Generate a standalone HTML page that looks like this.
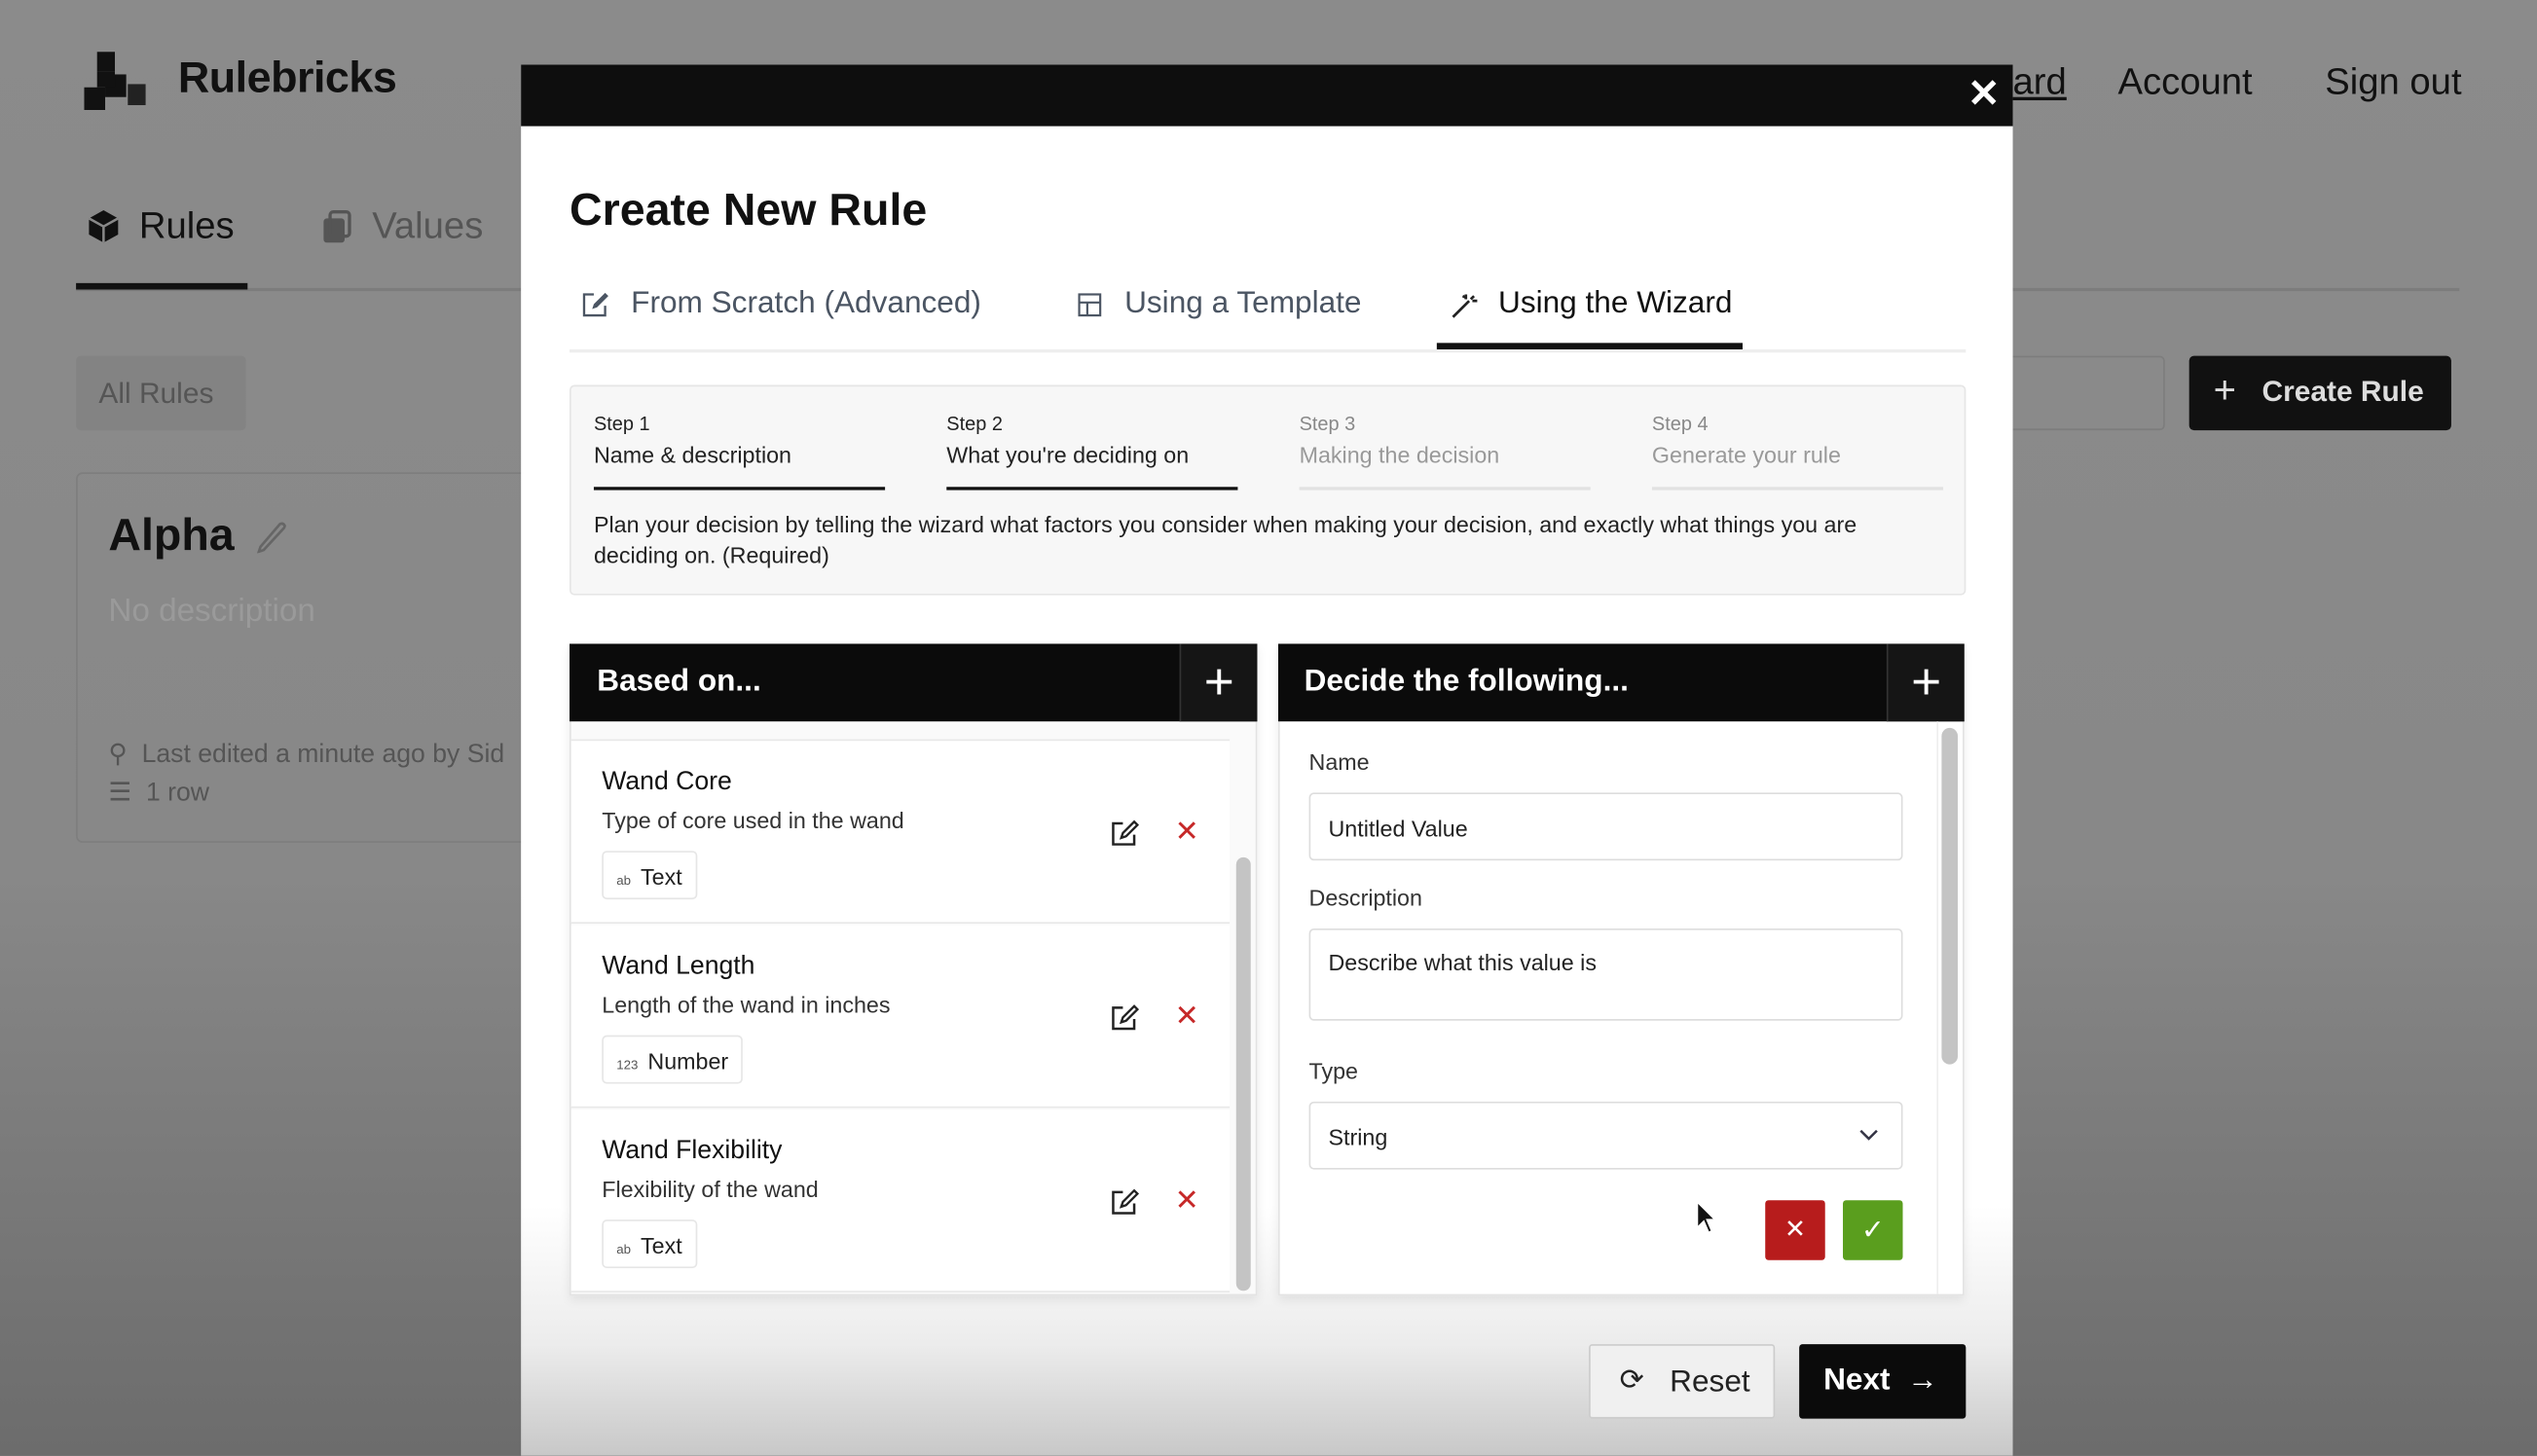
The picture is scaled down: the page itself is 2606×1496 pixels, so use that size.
<!DOCTYPE html>
<html><head><meta charset="utf-8"><style>
*{box-sizing:border-box;margin:0;padding:0}
html,body{width:2606px;height:1496px;overflow:hidden;background:#888}
#w{width:1568px;height:900px;transform:scale(1.662);transform-origin:0 0;position:relative;font-family:"Liberation Sans",sans-serif;background:linear-gradient(#8b8b8b 0%,#888 60%,#6c6c6c 100%);overflow:hidden}
.a{position:absolute;white-space:nowrap}
.step .n{font-size:12px;color:#222}
.step .t{font-size:14px;color:#222;margin-top:4px}
.step .u{height:2px;background:#111;margin-top:12px;width:180px}
.item{position:absolute;left:353px;width:407px;height:113px;border-bottom:1px solid #e8e8e8;background:#fff}
.item .h{position:absolute;left:19px;top:17px;font-size:16px;color:#111}
.item .d{position:absolute;left:19px;top:41px;font-size:14px;color:#333}
.item .tag{position:absolute;left:19px;top:68px;height:30px;border:1px solid #e6e6e6;border-radius:3px;font-size:14px;color:#222;padding:7px 8px 0 8px}
.item .tag small{font-size:8px;color:#555;margin-right:6px}
.lbl{font-size:14px;color:#333}
.inp{border:1px solid #ddd;border-radius:3px;background:#fff;font-size:14px;color:#222;padding-left:11px}
</style></head><body><div id="w">
<svg class="a" style="left:52px;top:32px" width="40" height="36" viewBox="0 0 40 36"><rect x="8" y="0" width="11" height="12" fill="#111"/><rect x="0" y="22" width="13" height="14" fill="#111"/><rect x="13" y="14" width="13" height="14" fill="#111"/><rect x="27" y="20" width="11" height="13" fill="#222"/><rect x="8" y="12" width="11" height="10" fill="#111"/></svg>
<div class="a" style="left:110px;top:33px;font-size:27px;font-weight:bold;color:#111;letter-spacing:-0.3px">Rulebricks</div>
<div class="a" style="left:1244px;top:37px;font-size:23px;color:#111;text-decoration:underline">ard</div>
<div class="a" style="left:1309px;top:37px;font-size:23px;color:#111">Account</div>
<div class="a" style="left:1437px;top:37px;font-size:23px;color:#111">Sign out</div>
<svg class="a" style="left:54px;top:129px" width="20" height="22" viewBox="0 0 20 22"><path d="M10 1L19 6V16L10 21L1 16V6Z" fill="#111"/><path d="M1 6L10 11L19 6M10 11V21" stroke="#888" stroke-width="1.5" fill="none"/></svg>
<div class="a" style="left:86px;top:126px;font-size:23px;color:#111">Rules</div>
<svg class="a" style="left:198px;top:129px" width="20" height="22"><rect x="2" y="6" width="13" height="15" rx="2" fill="#555"/><rect x="6" y="2" width="12" height="15" rx="2" fill="none" stroke="#555" stroke-width="2"/></svg>
<div class="a" style="left:230px;top:126px;font-size:23px;color:#555">Values</div>
<div class="a" style="left:47px;top:178px;width:1473px;height:2px;background:#7c7c7c"></div>
<div class="a" style="left:47px;top:175px;width:106px;height:4px;background:#111"></div>
<div class="a" style="left:47px;top:220px;width:105px;height:46px;background:#838383;border-radius:3px;font-size:18px;color:#555;padding:13px 0 0 14px">All Rules</div>
<div class="a" style="left:1230px;top:220px;width:108px;height:46px;border:1px solid #7d7d7d;border-radius:3px"></div>
<div class="a" style="left:1353px;top:220px;width:162px;height:46px;background:#111;border-radius:3px;font-size:18px;color:#ddd;font-weight:bold;padding:12px 0 0 45px">Create Rule</div>
<div class="a" style="left:1368px;top:232px;font-size:24px;color:#ddd;line-height:20px">+</div>
<div class="a" style="left:47px;top:292px;width:290px;height:229px;border:1px solid #7e7e7e;border-radius:4px"></div>
<div class="a" style="left:67px;top:315px;font-size:28px;font-weight:bold;color:#111">Alpha</div>
<svg class="a" style="left:157px;top:320px" width="22" height="22"><path d="M4 18L16 4Q18 3 19 5Q19 6 18 7L6 20L3 21Z" fill="none" stroke="#666" stroke-width="1.6"/></svg>
<div class="a" style="left:67px;top:367px;font-size:20px;color:#9a9a9a">No description</div>
<div class="a" style="left:67px;top:456px;font-size:16px;color:#555">⚲&nbsp; Last edited a minute ago by Sid</div>
<div class="a" style="left:67px;top:480px;font-size:16px;color:#555">☰&nbsp; 1 row</div>

<div class="a" style="left:322px;top:40px;width:922px;height:860px;background:linear-gradient(#fff 0%,#fff 82%,#ececec 92%,#c8c8c8 100%)"></div>
<div class="a" style="left:322px;top:40px;width:922px;height:38px;background:#0e0e0e"></div>
<div class="a" style="left:1216px;top:44px;font-size:24px;color:#fff;font-weight:bold">✕</div>
<div class="a" style="left:352px;top:114px;font-size:28px;font-weight:bold;color:#111">Create New Rule</div>
<svg class="a" style="left:359px;top:179px" width="18" height="18"><path d="M8 3H2V16H15V10" fill="none" stroke="#4b5563" stroke-width="1.4"/><path d="M7 12L8 9L15 2L17 4L10 11Z" fill="#4b5563"/></svg>
<div class="a" style="left:390px;top:177px;font-size:19px;color:#4b5563">From Scratch (Advanced)</div>
<svg class="a" style="left:666px;top:181px" width="15" height="15"><rect x="1" y="1" width="13" height="13" fill="none" stroke="#4b5563" stroke-width="1.3"/><path d="M1 6H14M6 6V14" stroke="#4b5563" stroke-width="1.3"/></svg>
<div class="a" style="left:695px;top:177px;font-size:19px;color:#4b5563">Using a Template</div>
<svg class="a" style="left:896px;top:180px" width="18" height="18"><path d="M2 16L12 6M10 2V5M14 6H17M15 3L13 5M8 3L10 4" stroke="#222" stroke-width="1.6" fill="none"/></svg>
<div class="a" style="left:926px;top:177px;font-size:19px;color:#111">Using the Wizard</div>
<div class="a" style="left:352px;top:216px;width:863px;height:2px;background:#eee"></div>
<div class="a" style="left:888px;top:212px;width:189px;height:4px;background:#111"></div>

<div class="a" style="left:352px;top:238px;width:863px;height:130px;background:#f7f7f7;border:1px solid #e6e6e6;border-radius:3px"></div>
<div class="a step" style="left:367px;top:255px"><div class="n">Step 1</div><div class="t">Name &amp; description</div><div class="u"></div></div>
<div class="a step" style="left:585px;top:255px"><div class="n">Step 2</div><div class="t">What you're deciding on</div><div class="u"></div></div>
<div class="a step" style="left:803px;top:255px"><div class="n" style="color:#888">Step 3</div><div class="t" style="color:#999">Making the decision</div><div class="u" style="background:#e2e2e2"></div></div>
<div class="a step" style="left:1021px;top:255px"><div class="n" style="color:#888">Step 4</div><div class="t" style="color:#999">Generate your rule</div><div class="u" style="background:#e2e2e2"></div></div>
<div class="a" style="left:367px;top:315px;font-size:14px;color:#222;line-height:19px;white-space:normal;width:830px">Plan your decision by telling the wizard what factors you consider when making your decision, and exactly what things you are deciding on. (Required)</div>

<div class="a" style="left:352px;top:398px;width:425px;height:403px;border:1px solid #e3e3e3;background:#fafafa;box-shadow:0 3px 6px rgba(0,0,0,.08)"></div>
<div class="a" style="left:352px;top:398px;width:425px;height:48px;background:#0b0b0b"></div>
<div class="a" style="left:369px;top:411px;font-size:19px;font-weight:bold;color:#fff">Based on...</div>
<div class="a" style="left:729px;top:398px;width:48px;height:48px;background:#151515;border-left:1px solid #333;color:#fff;font-size:32px;text-align:center;line-height:46px">+</div>
<div class="item" style="top:458px"><div class="h">Wand Core</div><div class="d">Type of core used in the wand</div><div class="tag"><small>ab</small>Text</div></div>
<div class="item" style="top:572px"><div class="h">Wand Length</div><div class="d">Length of the wand in inches</div><div class="tag"><small>123</small>Number</div></div>
<div class="item" style="top:686px"><div class="h">Wand Flexibility</div><div class="d">Flexibility of the wand</div><div class="tag"><small>ab</small>Text</div></div>
<div class="a" style="left:353px;top:457px;width:407px;height:1px;background:#e8e8e8"></div>
<svg class="a" style="left:686px;top:506px" width="18" height="18"><path d="M8 3H2V16H15V10" fill="none" stroke="#222" stroke-width="1.5"/><path d="M7 12L8 9L15 2L17 4L10 11Z" fill="none" stroke="#222" stroke-width="1.4"/></svg>
<div class="a" style="left:726px;top:504px;font-size:18px;color:#c62828">✕</div>
<svg class="a" style="left:686px;top:620px" width="18" height="18"><path d="M8 3H2V16H15V10" fill="none" stroke="#222" stroke-width="1.5"/><path d="M7 12L8 9L15 2L17 4L10 11Z" fill="none" stroke="#222" stroke-width="1.4"/></svg>
<div class="a" style="left:726px;top:618px;font-size:18px;color:#c62828">✕</div>
<svg class="a" style="left:686px;top:734px" width="18" height="18"><path d="M8 3H2V16H15V10" fill="none" stroke="#222" stroke-width="1.5"/><path d="M7 12L8 9L15 2L17 4L10 11Z" fill="none" stroke="#222" stroke-width="1.4"/></svg>
<div class="a" style="left:726px;top:732px;font-size:18px;color:#c62828">✕</div>
<div class="a" style="left:764px;top:530px;width:9px;height:268px;border-radius:5px;background:#c4c4c4"></div>

<div class="a" style="left:790px;top:398px;width:424px;height:403px;border:1px solid #e3e3e3;background:#fff;box-shadow:0 3px 6px rgba(0,0,0,.08)"></div>
<div class="a" style="left:790px;top:398px;width:424px;height:48px;background:#0b0b0b"></div>
<div class="a" style="left:806px;top:411px;font-size:19px;font-weight:bold;color:#fff">Decide the following...</div>
<div class="a" style="left:1166px;top:398px;width:48px;height:48px;background:#151515;border-left:1px solid #333;color:#fff;font-size:32px;text-align:center;line-height:46px">+</div>
<div class="a lbl" style="left:809px;top:463px">Name</div>
<div class="a inp" style="left:809px;top:490px;width:367px;height:42px;padding-top:13px">Untitled Value</div>
<div class="a lbl" style="left:809px;top:547px">Description</div>
<div class="a inp" style="left:809px;top:574px;width:367px;height:57px;padding-top:12px">Describe what this value is</div>
<div class="a lbl" style="left:809px;top:654px">Type</div>
<div class="a inp" style="left:809px;top:681px;width:367px;height:42px;padding-top:13px">String</div>
<svg class="a" style="left:1149px;top:698px" width="12" height="8"><path d="M1 1L6 6L11 1" stroke="#334" stroke-width="1.5" fill="none"/></svg>
<div class="a" style="left:1091px;top:742px;width:37px;height:37px;background:#b71c1c;border-radius:2px;color:#fff;text-align:center;line-height:37px;font-size:16px">✕</div>
<div class="a" style="left:1139px;top:742px;width:37px;height:37px;background:#5a9e1e;border-radius:2px;color:#fff;text-align:center;line-height:37px;font-size:17px">✓</div>
<div class="a" style="left:1200px;top:450px;width:10px;height:208px;border-radius:5px;background:#c4c4c4"></div>
<div class="a" style="left:1197px;top:446px;width:1px;height:354px;background:#eee"></div>
<svg class="a" style="left:1047px;top:742px" width="14" height="22"><path d="M2 1V17L6 13L9 20L11 19L8 12H13Z" fill="#111" stroke="#fff" stroke-width="1"/></svg>

<div class="a" style="left:982px;top:831px;width:115px;height:46px;border:1px solid #ccc;border-radius:2px;background:#f0f0f0;font-size:19px;color:#222;padding:12px 0 0 49px">Reset</div>
<div class="a" style="left:1001px;top:843px;font-size:18px;color:#222">⟳</div>
<div class="a" style="left:1112px;top:831px;width:103px;height:46px;background:#0b0b0b;border-radius:2px;font-size:19px;font-weight:bold;color:#fff;padding:12px 0 0 15px">Next &nbsp;→</div>
</div></body></html>
